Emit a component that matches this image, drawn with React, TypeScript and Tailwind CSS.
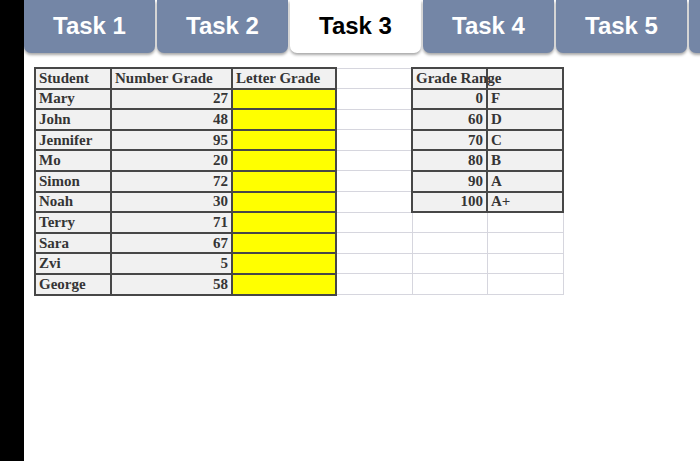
import React from 'react';

const tabs = ['Task 1', 'Task 2', 'Task 3', 'Task 4', 'Task 5', ''];

const students: [string, number][] = [
  ['Mary', 27],
  ['John', 48],
  ['Jennifer', 95],
  ['Mo', 20],
  ['Simon', 72],
  ['Noah', 30],
  ['Terry', 71],
  ['Sara', 67],
  ['Zvi', 5],
  ['George', 58],
];

const ranges: [number, string][] = [
  [0, 'F'],
  [60, 'D'],
  [70, 'C'],
  [80, 'B'],
  [90, 'A'],
  [100, 'A+'],
];

const dark = 'border-2 border-[#474747] bg-[#f1f1f1] px-[3px] leading-none';
const light = 'border border-[#d6d6de] bg-white';

const App: React.FC = () => {
  return (
    <div className="flex w-[700px] h-[461px] overflow-hidden bg-white">
      <div className="w-[24px] shrink-0 bg-black" />
      <div className="flex-1 overflow-hidden">
        <div className="flex gap-[2px] h-[53px] w-[800px]">
          {tabs.map((t, i) => (
            <div
              key={i}
              className={`w-[131px] shrink-0 h-[53px] rounded-b-[7px] flex items-center justify-center pb-[2px] text-[24px] font-bold font-['Liberation_Sans',Arial,sans-serif] shadow-[0_2px_3px_rgba(0,0,0,0.35)] ${
                i === 2 ? 'bg-white text-black' : 'bg-[#7486a6] text-white'
              }`}
            >
              {t}
            </div>
          ))}
        </div>

        <table className="ml-[10px] mt-[14px] w-[528px] border-collapse table-fixed font-['Liberation_Serif','Times_New_Roman',serif] font-bold text-[15px] text-[#353535]">
          <colgroup>
            <col className="w-[76px]" />
            <col className="w-[121px]" />
            <col className="w-[104px]" />
            <col className="w-[76px]" />
            <col className="w-[75px]" />
            <col className="w-[76px]" />
          </colgroup>
          <tbody>
            <tr className="h-[20.6px]">
              <td className={dark}>Student</td>
              <td className={dark}>Number Grade</td>
              <td className={dark}>Letter Grade</td>
              <td className={light} />
              <td className={`${dark} whitespace-nowrap`}>Grade Range</td>
              <td className={dark} />
            </tr>
            {students.map(([name, grade], i) => {
              const r = ranges[i];
              return (
                <tr key={name} className="h-[20.6px]">
                  <td className={dark}>{name}</td>
                  <td className={`${dark} text-right`}>{grade}</td>
                  <td className="border-2 border-[#474747] bg-[#ffff00]" />
                  <td className={light} />
                  {r ? (
                    <>
                      <td className={`${dark} text-right`}>{r[0]}</td>
                      <td className={dark}>{r[1]}</td>
                    </>
                  ) : (
                    <>
                      <td className={light} />
                      <td className={light} />
                    </>
                  )}
                </tr>
              );
            })}
          </tbody>
        </table>
      </div>
    </div>
  );
};

export default App;
